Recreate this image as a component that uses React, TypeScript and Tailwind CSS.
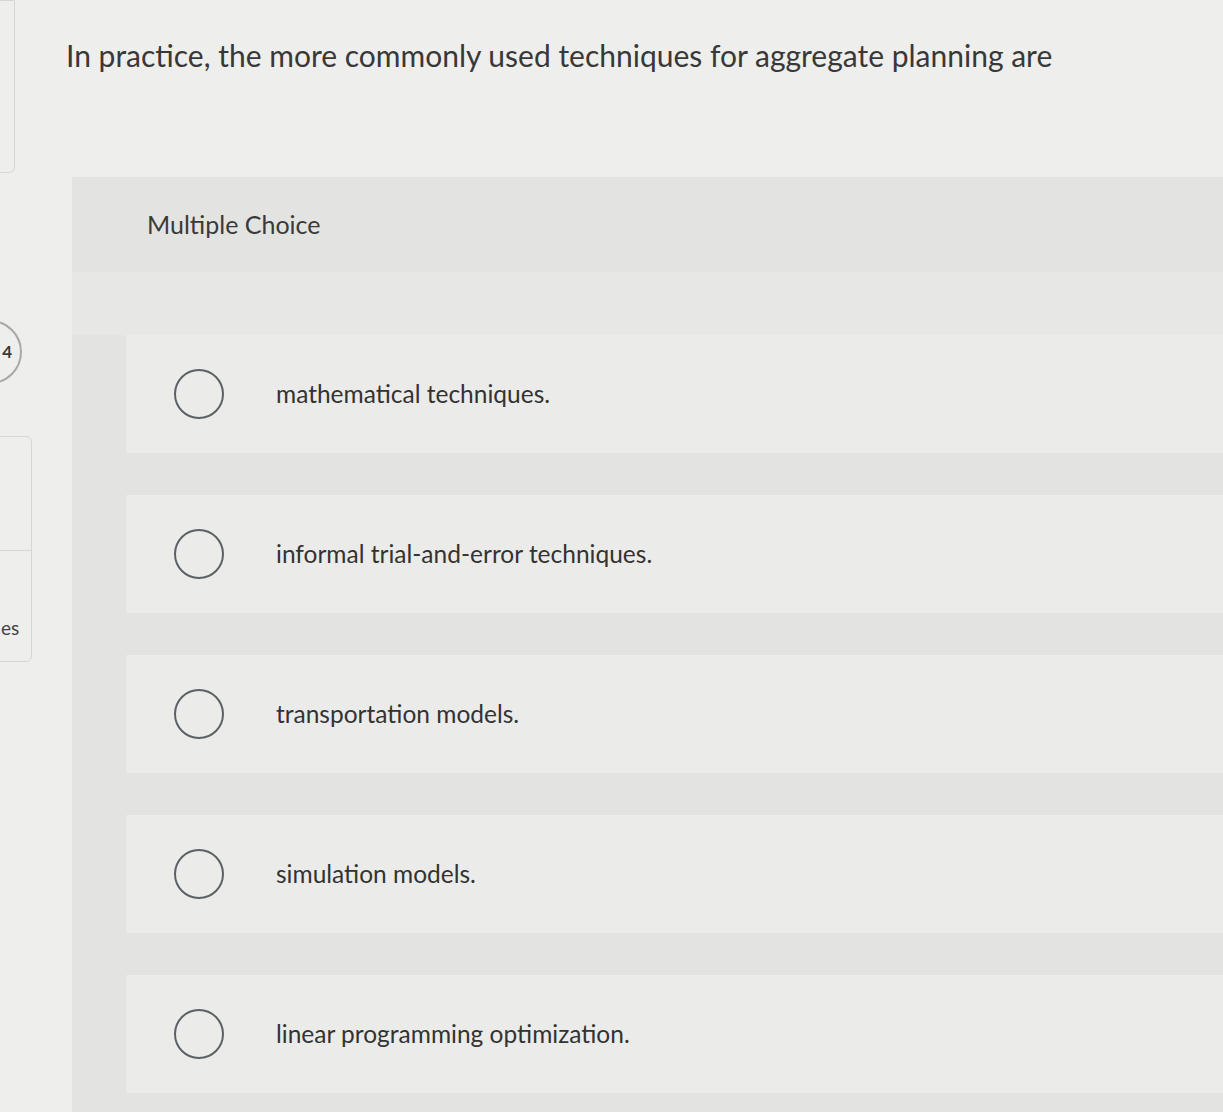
const options = [
  "mathematical techniques.",
  "informal trial-and-error techniques.",
  "transportation models.",
  "simulation models.",
  "linear programming optimization.",
];

function Radio() {
  return <span className="block h-[50px] w-[50px] shrink-0 rounded-full border-2 border-[#5c6166]" />;
}

export default function App() {
  return (
    <div className="flex min-h-[1112px] w-[1223px] overflow-hidden bg-[#eeeeec] font-['Lato',sans-serif] text-[#353535]">
      {/* left rail, mostly cut off */}
      <aside className="flex w-[40px] shrink-0 flex-col overflow-hidden">
        <div className="-ml-[20px] h-[173px] w-[35px] rounded-br-md border border-[#d6d6d4]" />
        <div className="-ml-[42px] mt-[147px] flex h-[64px] w-[64px] items-center justify-end rounded-full border-2 border-[#a8a8a6] pr-[20px] text-[17px] font-bold text-[#3a3a3a]">
          <span className="-mr-[12px]">4</span>
        </div>
        <div className="-ml-[10px] mt-[52px] flex h-[226px] w-[42px] flex-col rounded-r-md border border-[#d6d6d4]">
          <div className="h-[114px] border-b border-[#d6d6d4]" />
          <div className="flex flex-1 items-end pb-[24px] pl-[10px] text-[19px] leading-none text-[#444]">
            <span>es</span>
          </div>
        </div>
      </aside>

      <main className="flex flex-1 flex-col">
        <div className="h-[177px] pl-[26px] pt-[36px]">
          <h1 className="text-[30px] leading-[38px] text-[#383838]">
            In practice, the more commonly used techniques for aggregate planning are
          </h1>
        </div>

        <section className="ml-[32px] flex flex-1 flex-col bg-[#e3e3e1]">
          <div className="flex h-[95px] items-center pl-[75px] text-[25px] text-[#3a3a3a]">Multiple Choice</div>
          <div className="h-[63px] bg-[#e7e7e5]" />
          <ul className="flex flex-col gap-[42px] pl-[54px]">
            {options.map((o) => (
              <li key={o} className="flex h-[118px] items-center bg-[#ebebe9] pl-[48px]">
                <Radio />
                <span className="ml-[52px] text-[24.5px] text-[#333]">{o}</span>
              </li>
            ))}
          </ul>
        </section>
      </main>
    </div>
  );
}
